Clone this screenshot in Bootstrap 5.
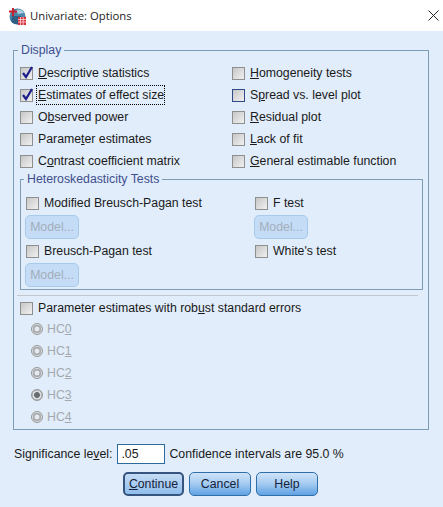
<!doctype html>
<html lang="en">
<head>
<meta charset="utf-8">
<title>Univariate: Options</title>
<link href="https://cdn.jsdelivr.net/npm/bootstrap@5.3.0/dist/css/bootstrap.min.css" rel="stylesheet">
<style>
html,body{margin:0;background:#e1edfa;}
body{font-family:"Liberation Sans",Arial,sans-serif;font-size:12.3px;color:#1a1a1a;line-height:22px;}
.dlg{width:443px;height:507px;overflow:hidden;background:#e1edfa;}
.ttl{height:31px;background:#fff;padding-left:9px;gap:4px;}
.ttl-text{font-family:"Open Sans",sans-serif;font-size:11.3px;color:#222;}
.ttl-x{margin-left:auto;margin-right:4px;}
.fs-a{border:1px solid #7d9db6;margin:11px 14px 0 13px;padding:0 5px 0 6px;height:388px;min-width:0;}
.fs-b{border:1px solid #7d9db6;margin:-1px 0 0;padding:0 0 0 5px;height:119px;min-width:0;}
.fs-a legend,.fs-b legend{float:none;width:auto;font-size:12.3px;line-height:16px;color:#3f4f8f;margin:0 0 0 -2px;padding:0 3px;}
.fs-b legend{margin-left:-2px;}
.two-a{display:grid;grid-template-columns:212px 212px;margin-top:4px;}
.two-b{display:grid;grid-template-columns:229px 169px;margin-top:4px;}
.rowx{height:22px;gap:5px;white-space:nowrap;}
.two-b .rowx{height:24px;}
.rowx u{text-underline-offset:1px;}
input.cb[type=checkbox]{width:13px;height:13px;margin:0;flex:none;border-radius:0;border:1px solid #8f8f8f;background-image:linear-gradient(135deg,#c6c6c6,#f1f1f1);opacity:1;box-shadow:none;}
input.cb[type=checkbox]:checked{border-color:#8f8f8f;background-color:#dcdcdc;background-image:linear-gradient(135deg,#c6c6c6,#f1f1f1);}
input.cb.hot[type=checkbox]{border-color:#2f4a86;}
.tickbox{width:13px;height:13px;flex:none;display:block;}
.tick{left:1px;top:-1px;pointer-events:none;}
.focusd{border:1px dotted #000;line-height:18px;padding:0 0 0 1px;margin-left:-2px;}
.mdl.btn{width:54px;height:24px;padding:0;font-size:12.3px;line-height:22px;border-radius:5px;border:1px solid #a8cbec;background:#c4dcf6;color:#a3aebb;opacity:1;margin-left:-1px;display:block;}
.sep{border:0;border-top:1px solid #c4c8cc;opacity:1;margin:5px 5px 1px -3px;}
.rd{gap:4px;height:22px;padding-left:11px;color:#a3a9af;}
input.rb[type=radio]{width:12px;height:12px;margin:0;flex:none;border:1px solid #969696;border-radius:50%;background:radial-gradient(circle,#e6eaee 0 32%,#a8acb0 38% 58%,#dce0e4 64%);opacity:1;}
input.rb[type=radio]:checked{border-color:#969696;background:radial-gradient(circle,#6a6c6e 0 38%,#d8dce0 44% 60%,#b3b6b9 65%);}
.rows-hc{margin-top:-1px;}
.sig{margin-top:8px;height:32px;padding-left:14px;white-space:nowrap;}
.sig-in.form-control{width:48px;height:20px;padding:0 0 0 3px;margin:0 4px 0 5px;font-size:12.3px;line-height:18px;border:1px solid #2b6a9c;border-radius:0;background:#fff;color:#1a1a1a;box-shadow:none;}
.acts{gap:5px;padding-left:123px;margin-top:2px;}
.act.btn{width:62px;height:24px;padding:0;font-size:12.3px;line-height:22px;border-radius:5px;border:1px solid #2f6ea8;color:#14233a;background:linear-gradient(#cfe3f8,#a9cdf2 45%,#5fa2e4);}
.act.btn.first{width:61px;border:2px solid #35547e;background:linear-gradient(#c5dcf5,#8fbdec);line-height:20px;}
</style>
</head>
<body>
<div class="dlg">
  <div class="ttl d-flex align-items-center">
    <svg width="17" height="18" viewBox="0 0 17 18">
      <circle cx="8.5" cy="9.5" r="8" fill="#4d86a8"/>
      <path d="M2 14a8 8 0 0 0 8 3l2-8H3z" fill="#2f5f85"/>
      <path d="M7 3a6 6 0 0 1 8 3l-6 1z" fill="#a9cfe0"/>
      <path d="M4 1v8M0 4.500h8" stroke="#c8202c" stroke-width="2"/>
      <rect x="9" y="10" width="8" height="8" fill="#d9343c"/>
      <path d="M9 12.500h8M9 15h8M11.500 10v8M14.200 10v8" stroke="#fbdada" stroke-width=".8"/>
    </svg>
    <span class="ttl-text">Univariate: Options</span>
    <svg class="ttl-x" width="11" height="11" viewBox="0 0 11 11"><path d="M.5.5l10 10M10.500.5l-10 10" stroke="#222" stroke-width="1" fill="none"/></svg>
  </div>

  <fieldset class="fs-a">
    <legend>Display</legend>
    <div class="two-a">
      <label class="rowx d-flex align-items-center"><span class="tickbox position-relative"><input class="cb form-check-input d-block" type="checkbox" checked><svg class="tick position-absolute" width="13" height="14" viewBox="0 0 13 14"><path d="M2 7l3 4 6-10" fill="none" stroke="#1c1c8c" stroke-width="2.200"/></svg></span><span><u>D</u>escriptive statistics</span></label>
      <label class="rowx d-flex align-items-center"><input class="cb form-check-input" type="checkbox"><span><u>H</u>omogeneity tests</span></label>
      <label class="rowx d-flex align-items-center"><span class="tickbox position-relative"><input class="cb form-check-input d-block" type="checkbox" checked><svg class="tick position-absolute" width="13" height="14" viewBox="0 0 13 14"><path d="M2 7l3 4 6-10" fill="none" stroke="#1c1c8c" stroke-width="2.200"/></svg></span><span class="focusd"><u>E</u>stimates of effect size</span></label>
      <label class="rowx d-flex align-items-center"><input class="cb hot form-check-input" type="checkbox"><span>S<u>p</u>read vs. level plot</span></label>
      <label class="rowx d-flex align-items-center"><input class="cb form-check-input" type="checkbox"><span>O<u>b</u>served power</span></label>
      <label class="rowx d-flex align-items-center"><input class="cb form-check-input" type="checkbox"><span><u>R</u>esidual plot</span></label>
      <label class="rowx d-flex align-items-center"><input class="cb form-check-input" type="checkbox"><span>Parame<u>t</u>er estimates</span></label>
      <label class="rowx d-flex align-items-center"><input class="cb form-check-input" type="checkbox"><span><u>L</u>ack of fit</span></label>
      <label class="rowx d-flex align-items-center"><input class="cb form-check-input" type="checkbox"><span>C<u>o</u>ntrast coefficient matrix</span></label>
      <label class="rowx d-flex align-items-center"><input class="cb form-check-input" type="checkbox"><span><u>G</u>eneral estimable function</span></label>
    </div>

    <fieldset class="fs-b">
      <legend>Heteroskedasticity Tests</legend>
      <div class="two-b">
        <div>
          <label class="rowx d-flex align-items-center"><input class="cb form-check-input" type="checkbox"><span>Modified Breusch-Pagan test</span></label>
          <button class="mdl btn" type="button" disabled>Model...</button>
          <label class="rowx d-flex align-items-center"><input class="cb form-check-input" type="checkbox"><span>Breusch-Pagan test</span></label>
          <button class="mdl btn" type="button" disabled>Model...</button>
        </div>
        <div>
          <label class="rowx d-flex align-items-center"><input class="cb form-check-input" type="checkbox"><span>F test</span></label>
          <button class="mdl btn" type="button" disabled>Model...</button>
          <label class="rowx d-flex align-items-center"><input class="cb form-check-input" type="checkbox"><span>White's test</span></label>
        </div>
      </div>
    </fieldset>

    <hr class="sep">
    <label class="rowx d-flex align-items-center"><input class="cb form-check-input" type="checkbox"><span>Parameter estimates with rob<u>u</u>st standard errors</span></label>
    <div class="rows-hc">
    <label class="rd d-flex align-items-center"><input class="rb form-check-input" type="radio" name="hc" disabled><span>HC<u>0</u></span></label>
    <label class="rd d-flex align-items-center"><input class="rb form-check-input" type="radio" name="hc" disabled><span>HC<u>1</u></span></label>
    <label class="rd d-flex align-items-center"><input class="rb form-check-input" type="radio" name="hc" disabled><span>HC<u>2</u></span></label>
    <label class="rd d-flex align-items-center"><input class="rb form-check-input" type="radio" name="hc" checked disabled><span>HC<u>3</u></span></label>
    <label class="rd d-flex align-items-center"><input class="rb form-check-input" type="radio" name="hc" disabled><span>HC<u>4</u></span></label>
    </div>
  </fieldset>

  <div class="sig d-flex align-items-center">
    <span>Significance le<u>v</u>el:</span>
    <input class="sig-in form-control" type="text" value=".05">
    <span>Confidence intervals are 95.0 %</span>
  </div>
  <div class="acts d-flex">
    <button class="act first btn" type="button"><u>C</u>ontinue</button>
    <button class="act btn" type="button">Cancel</button>
    <button class="act btn" type="button">Help</button>
  </div>
</div>
<script src="https://cdn.jsdelivr.net/npm/bootstrap@5.3.0/dist/js/bootstrap.bundle.min.js"></script>
</body>
</html>
